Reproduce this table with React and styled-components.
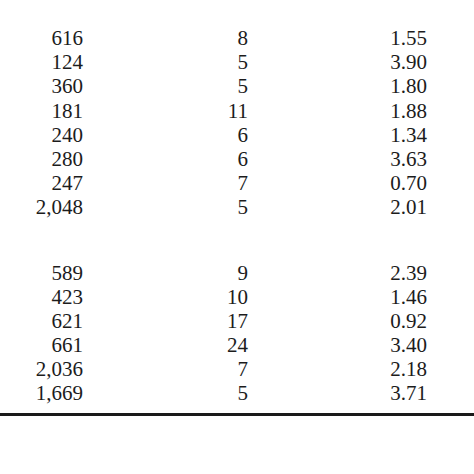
import styled, { createGlobalStyle } from "styled-components";

const GlobalStyle = createGlobalStyle`
  html, body {
    margin: 0;
    padding: 0;
    background: #ffffff;
  }
`;

const groups = [
  [
    ["616", "8", "1.55"],
    ["124", "5", "3.90"],
    ["360", "5", "1.80"],
    ["181", "11", "1.88"],
    ["240", "6", "1.34"],
    ["280", "6", "3.63"],
    ["247", "7", "0.70"],
    ["2,048", "5", "2.01"],
  ],
  [
    ["589", "9", "2.39"],
    ["423", "10", "1.46"],
    ["621", "17", "0.92"],
    ["661", "24", "3.40"],
    ["2,036", "7", "2.18"],
    ["1,669", "5", "3.71"],
  ],
];

const Page = styled.div`
  width: 474px;
  height: 474px;
  overflow: hidden;
  padding-top: 26px;
  box-sizing: border-box;
  font-family: "Liberation Serif", "Times New Roman", serif;
  font-size: 21px;
  color: #1c1c1c;
`;

const Group = styled.div`
  margin-top: ${({ $first }) => ($first ? "0" : "41px")};
`;

const Row = styled.div`
  display: grid;
  grid-template-columns: 83px 165px 179px;
  height: 24.2px;
  line-height: 24.2px;
`;

const Cell = styled.span`
  text-align: right;
  white-space: nowrap;
`;

const Rule = styled.div`
  margin-top: 7.5px;
  height: 3px;
  background: #1a1a1a;
  width: 100%;
`;

export default function App() {
  return (
    <>
      <GlobalStyle />
      <Page>
        {groups.map((rows, gi) => (
          <Group key={gi} $first={gi === 0}>
            {rows.map((r, ri) => (
              <Row key={ri}>
                {r.map((v, ci) => (
                  <Cell key={ci}>{v}</Cell>
                ))}
              </Row>
            ))}
          </Group>
        ))}
        <Rule />
      </Page>
    </>
  );
}
